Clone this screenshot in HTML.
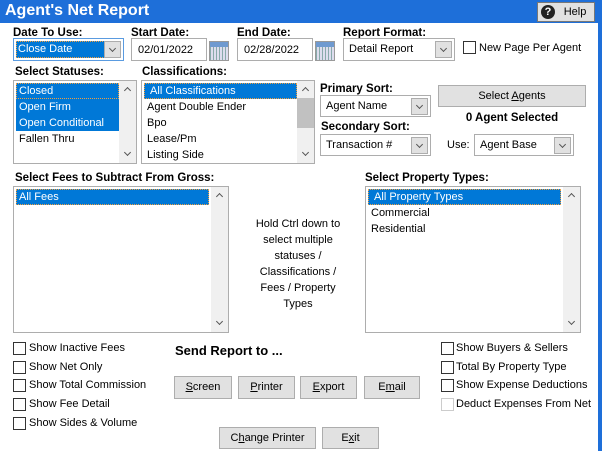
<!DOCTYPE html><html><head><style>
*{box-sizing:border-box;margin:0;padding:0}
body{width:602px;height:451px;background:#fff;font-family:"Liberation Sans",Arial,sans-serif;font-size:11px;color:#000;position:relative;overflow:hidden}
.a{position:absolute;white-space:nowrap}
.b{font-weight:bold;font-size:11.5px}
.combo{position:absolute;border:1px solid #adadad;background:#fff;height:23px;padding:4px 0 0 5px}
.combo .dd{position:absolute;right:2px;top:2px;width:17px;height:17px;background:#e1e1e1;border:1px solid #adadad}
.combo .dd:after{content:"";position:absolute;left:5px;top:4px;width:4px;height:4px;border-right:1px solid #555;border-bottom:1px solid #555;transform:rotate(45deg)}
.inp{position:absolute;border:1px solid #adadad;height:23px;padding:5px 0 0 6px;background:#fff}
.cal{position:absolute;width:20px;height:20px;border:1px solid #999;background-image:linear-gradient(#6f9ad0 0 5px,transparent 5px),repeating-linear-gradient(90deg,#8aa 0 1px,#dde 1px 3px)}
.list{position:absolute;border:1px solid #adadad;background:#fff}
.it{height:16px;line-height:16px;padding-left:3px}
.sel{background:#0078d7;color:#fff}
.foc{outline:1px dotted #f0a040;outline-offset:-1px}
.sb{position:absolute;right:0;top:0;bottom:0;width:17px;background:#f0f0f0}
.sb:before,.sb:after{content:"";position:absolute;left:6px;width:4px;height:4px;border-left:1px solid #555;border-top:1px solid #555}
.sb:before{top:7px;transform:rotate(45deg)}
.sb:after{bottom:8px;transform:rotate(225deg)}
.btn{position:absolute;background:#e1e1e1;border:1px solid #adadad;text-align:center;height:23px;line-height:21px}
.cb{position:absolute;width:13px;height:13px;border:1px solid #333;background:#fff}
</style></head><body>
<div class="a" style="left:0;top:0;width:602px;height:23px;background:#1e6fd9"></div>
<div class="a" style="left:5px;top:2px;color:#fff;font-weight:bold;font-size:16px">Agent's Net Report</div>
<div class="a" style="left:598px;top:0;width:4px;height:451px;background:#1e6fd9"></div>
<div class="btn" style="left:537px;top:2px;width:58px;height:20px;line-height:18px;border-color:#777;padding-left:18px">Help</div>
<div class="a" style="left:541px;top:5px;width:14px;height:14px;border-radius:50%;background:#222;color:#fff;font-weight:bold;font-size:11px;text-align:center;line-height:14px">?</div>

<div class="a b" style="left:13px;top:27px">Date To Use:</div>
<div class="combo" style="left:13px;top:38px;width:111px;border-color:#5a9be0"><div class="a sel foc" style="left:2px;top:2px;width:89px;height:17px;padding:2px 0 0 2px">Close Date</div><div class="dd"></div></div>
<div class="a b" style="left:131px;top:27px">Start Date:</div>
<div class="inp" style="left:131px;top:38px;width:76px">02/01/2022</div>
<div class="cal" style="left:209px;top:41px"></div>
<div class="a b" style="left:237px;top:27px">End Date:</div>
<div class="inp" style="left:237px;top:38px;width:76px">02/28/2022</div>
<div class="cal" style="left:315px;top:41px"></div>
<div class="a b" style="left:343px;top:27px">Report Format:</div>
<div class="combo" style="left:343px;top:38px;width:112px">Detail Report<div class="dd"></div></div>
<div class="cb" style="left:463px;top:41px"></div>
<div class="a" style="left:479px;top:42px">New Page Per Agent</div>

<div class="a b" style="left:15px;top:66px">Select Statuses:</div>
<div class="list" style="left:13px;top:80px;width:124px;height:84px">
<div style="position:absolute;left:2px;top:2px;width:103px"><div class="it sel foc">Closed</div><div class="it sel">Open Firm</div><div class="it sel">Open Conditional</div><div class="it">Fallen Thru</div></div><div class="sb"></div></div>
<div class="a b" style="left:142px;top:66px">Classifications:</div>
<div class="list" style="left:141px;top:80px;width:174px;height:84px">
<div style="position:absolute;left:2px;top:2px;width:153px"><div class="it sel foc">&nbsp;All Classifications</div><div class="it">Agent Double Ender</div><div class="it">Bpo</div><div class="it">Lease/Pm</div><div class="it">Listing Side</div></div><div class="sb"><div style="position:absolute;left:0;top:17px;width:17px;height:30px;background:#c1c1c1"></div></div></div>

<div class="a b" style="left:320px;top:83px">Primary Sort:</div>
<div class="combo" style="left:320px;top:95px;width:111px;height:22px">Agent Name<div class="dd"></div></div>
<div class="a b" style="left:321px;top:121px">Secondary Sort:</div>
<div class="combo" style="left:320px;top:134px;width:111px;height:22px">Transaction #<div class="dd"></div></div>
<div class="btn" style="left:438px;top:85px;width:148px;height:22px;line-height:20px">Select <u>A</u>gents</div>
<div class="a b" style="left:438px;top:112px;width:148px;text-align:center">0 Agent Selected</div>
<div class="a" style="left:447px;top:139px">Use:</div>
<div class="combo" style="left:474px;top:134px;width:100px;height:22px">Agent Base<div class="dd"></div></div>

<div class="a b" style="left:15px;top:172px">Select Fees to Subtract From Gross:</div>
<div class="list" style="left:13px;top:186px;width:216px;height:147px"><div style="position:absolute;left:2px;top:2px;width:193px"><div class="it sel foc">All Fees</div></div><div class="sb"></div></div>
<div class="a" style="left:250px;top:216px;width:96px;text-align:center;line-height:16px">Hold Ctrl down to<br>select multiple<br>statuses /<br>Classifications /<br>Fees / Property<br>Types</div>
<div class="a b" style="left:365px;top:172px">Select Property Types:</div>
<div class="list" style="left:365px;top:186px;width:216px;height:147px"><div style="position:absolute;left:2px;top:2px;width:193px"><div class="it sel foc">&nbsp;All Property Types</div><div class="it">Commercial</div><div class="it">Residential</div></div><div class="sb"></div></div>

<div class="cb" style="left:13px;top:342px"></div><div class="a" style="left:29px;top:342px">Show Inactive Fees</div>
<div class="cb" style="left:13px;top:361px"></div><div class="a" style="left:29px;top:361px">Show Net Only</div>
<div class="cb" style="left:13px;top:379px"></div><div class="a" style="left:29px;top:379px">Show Total Commission</div>
<div class="cb" style="left:13px;top:398px"></div><div class="a" style="left:29px;top:398px">Show Fee Detail</div>
<div class="cb" style="left:13px;top:417px"></div><div class="a" style="left:29px;top:417px">Show Sides &amp; Volume</div>
<div class="a" style="left:175px;top:343px;font-weight:bold;font-size:13px">Send Report to ...</div>
<div class="btn" style="left:174px;top:376px;width:58px"><u>S</u>creen</div>
<div class="btn" style="left:238px;top:376px;width:57px"><u>P</u>rinter</div>
<div class="btn" style="left:300px;top:376px;width:57px"><u>E</u>xport</div>
<div class="btn" style="left:364px;top:376px;width:56px">E<u>m</u>ail</div>
<div class="btn" style="left:219px;top:427px;width:97px;height:22px">C<u>h</u>ange Printer</div>
<div class="btn" style="left:322px;top:427px;width:57px;height:22px">E<u>x</u>it</div>
<div class="cb" style="left:441px;top:342px"></div><div class="a" style="left:456px;top:342px">Show Buyers &amp; Sellers</div>
<div class="cb" style="left:441px;top:361px"></div><div class="a" style="left:456px;top:361px">Total By Property Type</div>
<div class="cb" style="left:441px;top:379px"></div><div class="a" style="left:456px;top:379px">Show Expense Deductions</div>
<div class="cb" style="left:441px;top:398px;border-color:#ccc"></div><div class="a" style="left:456px;top:398px">Deduct Expenses From Net</div>
</body></html>
